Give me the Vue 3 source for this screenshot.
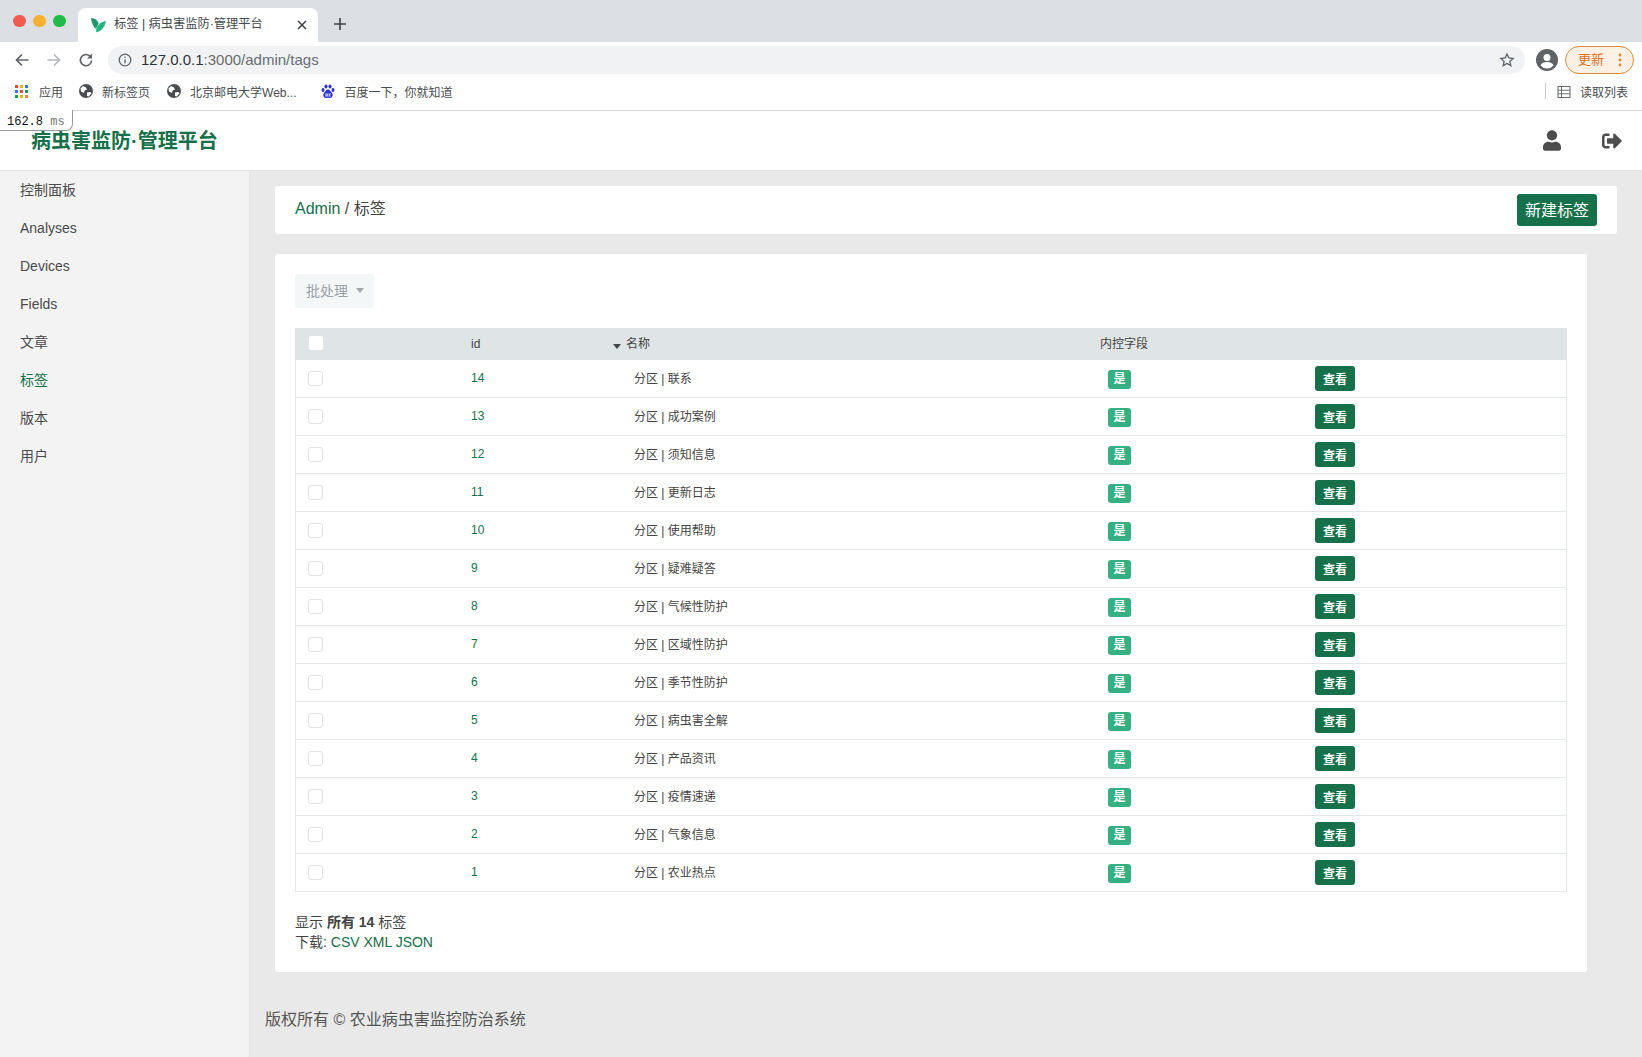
<script setup>
const nav = [
  { label: '控制面板' }, { label: 'Analyses' }, { label: 'Devices' }, { label: 'Fields' },
  { label: '文章' }, { label: '标签', active: true }, { label: '版本' }, { label: '用户' },
]
const rows = [
  [14, '联系'], [13, '成功案例'], [12, '须知信息'], [11, '更新日志'], [10, '使用帮助'],
  [9, '疑难疑答'], [8, '气候性防护'], [7, '区域性防护'], [6, '季节性防护'], [5, '病虫害全解'],
  [4, '产品资讯'], [3, '疫情速递'], [2, '气象信息'], [1, '农业热点'],
]
const appColors = ['#e0493d', '#f4b400', '#3c78d8', '#3c78d8', '#e0493d', '#0f9d58', '#0f9d58', '#f4b400', '#e08a3d']
</script>

<template>
  <div class="page">
    <div class="browser">
      <div class="tabstrip">
        <div class="lights">
          <i class="light red"></i><i class="light amber"></i><i class="light green"></i>
        </div>
        <div class="tab">
          <svg class="favicon" viewBox="0 0 16 16"><path fill="#1c9a6a" d="M0 .5C4 .8 7 2.500 8 6.500L5.500 12C2.500 10.500.8 6 0 .5z"/><path fill="#25b680" d="M15.800 3.500C15.300 9 12 14.500 5.500 15.800 4.800 10 9 5 15.800 3.500z"/></svg>
          <span class="tab-title">标签 | 病虫害监防·管理平台</span>
          <svg class="tab-close" viewBox="0 0 10 10"><path d="M1 1l8 8M9 1l-8 8" stroke="#3c4043" stroke-width="1.500" fill="none"/></svg>
        </div>
        <svg class="new-tab" viewBox="0 0 12 12"><path d="M6 0v12M0 6h12" stroke="#3c4043" stroke-width="1.600" fill="none"/></svg>
      </div>
      <div class="toolbar">
        <svg class="nav-ic" viewBox="0 0 14 14"><path d="M13.500 7H1.500M7 1.500 1.500 7 7 12.500" stroke="#5f6368" stroke-width="1.700" fill="none"/></svg>
        <svg class="nav-ic" viewBox="0 0 14 14"><path d="M.5 7h12M7 1.500 12.500 7 7 12.500" stroke="#b4b7bb" stroke-width="1.700" fill="none"/></svg>
        <svg class="nav-ic" viewBox="0 0 14 14"><path d="M11.800 4.200A5.600 5.600 0 1 0 12.600 7.500" stroke="#5f6368" stroke-width="1.700" fill="none"/><path d="M13 0.500v5H8z" fill="#5f6368"/></svg>
        <div class="omnibox">
          <svg class="info" viewBox="0 0 14 14"><circle cx="7" cy="7" r="5.800" stroke="#5f6368" stroke-width="1.300" fill="none"/><path d="M7 6.200v4M7 3.700v1.300" stroke="#5f6368" stroke-width="1.300"/></svg>
          <span class="url"><b>127.0.0.1</b>:3000/admin/tags</span>
          <svg class="star" viewBox="0 0 24 24"><path d="M12 3l2.700 6 6.500.7-4.900 4.400 1.400 6.400-5.700-3.300-5.700 3.300 1.400-6.400-4.900-4.400 6.500-.7z" stroke="#5f6368" stroke-width="2" fill="none"/></svg>
        </div>
        <svg class="avatar" viewBox="0 0 22 22"><circle cx="11" cy="11" r="11" fill="#5f6368"/><circle cx="11" cy="8.500" r="3.500" fill="#fff"/><path d="M4.500 16.500c1-2.800 4-3.500 6.500-3.500s5.500.7 6.500 3.500A8.500 8.500 0 0 1 11 19.500a8.500 8.500 0 0 1-6.500-3z" fill="#fff"/></svg>
        <div class="update">
          <span>更新</span>
          <svg class="dots" viewBox="0 0 4 14"><circle cx="2" cy="2" r="1.400"/><circle cx="2" cy="7" r="1.400"/><circle cx="2" cy="12" r="1.400"/></svg>
        </div>
      </div>
      <div class="bookmarks">
        <div class="bm first">
          <span class="apps"><i v-for="(c, i) in appColors" :key="i" :style="{ background: c }"></i></span>
          <span>应用</span>
        </div>
        <div class="bm">
          <svg class="globe" viewBox="0 0 14 14"><circle cx="7" cy="7" r="7" fill="#4a4d51"/><path d="M1.500 4.500 4 2l3 1.500 1 2-2.500 1L5 9 2 7.500zM8 8.500l3.500-.5 1 1.500-3 3-1.500-.5z" fill="#fff"/></svg>
          <span>新标签页</span>
        </div>
        <div class="bm wide">
          <svg class="globe" viewBox="0 0 14 14"><circle cx="7" cy="7" r="7" fill="#4a4d51"/><path d="M1.500 4.500 4 2l3 1.500 1 2-2.500 1L5 9 2 7.500zM8 8.500l3.500-.5 1 1.500-3 3-1.500-.5z" fill="#fff"/></svg>
          <span>北京邮电大学Web...</span>
        </div>
        <div class="bm baidu">
          <svg class="paw" viewBox="0 0 14 15"><g fill="#2b32d6"><ellipse cx="2" cy="6" rx="1.500" ry="2"/><ellipse cx="5" cy="2.500" rx="1.500" ry="2"/><ellipse cx="9" cy="2.500" rx="1.500" ry="2"/><ellipse cx="12" cy="6" rx="1.500" ry="2"/><path d="M7 5.500c2 0 2.500 2 4 3.500 1.500 1.700.5 5-2 5-1 0-1.500-.3-2-.3s-1 .3-2 .3c-2.500 0-3.500-3.300-2-5 1.500-1.500 2-3.500 4-3.500z"/></g><path d="M4 9.500h6v3H4z" fill="#dfe3ff"/><path d="M5 9.500v3M7.300 9.500v3M9.300 9.500v3" stroke="#2b32d6" stroke-width=".8"/></svg>
          <span>百度一下，你就知道</span>
        </div>
        <div class="reading">
          <svg class="read-ic" viewBox="0 0 14 14"><path d="M1 1.500h12v11H1zM4.500 1.500v11M1 5.200h12M1 8.800h12" stroke="#6b6e72" stroke-width="1.100" fill="none"/></svg>
          <span>读取列表</span>
        </div>
      </div>
    </div>

    <div class="perf"><b>162.8</b> <span>ms</span></div>

    <header class="app-header">
      <div class="brand">病虫害监防·管理平台</div>
      <div class="head-icons">
        <svg class="user-ic" viewBox="0 0 448 512"><path d="M224 256c70.700 0 128-57.300 128-128S294.700 0 224 0 96 57.300 96 128s57.300 128 128 128zm89.600 32h-16.700c-22.200 10.200-46.900 16-72.900 16s-50.600-5.800-72.900-16h-16.700C60.200 288 0 348.200 0 422.400V464c0 26.500 21.500 48 48 48h352c26.500 0 48-21.500 48-48v-41.600c0-74.200-60.200-134.400-134.400-134.400z"/></svg>
        <svg class="out-ic" viewBox="0 0 512 512"><path d="M497 273L329 441c-15 15-41 4.500-41-17v-96H152c-13.300 0-24-10.700-24-24v-96c0-13.300 10.700-24 24-24h136V88c0-21.400 25.900-32 41-17l168 168c9.300 9.400 9.300 24.600 0 34zM192 436v-40c0-6.600-5.400-12-12-12H96c-17.700 0-32-14.300-32-32V160c0-17.700 14.300-32 32-32h84c6.600 0 12-5.400 12-12V76c0-6.600-5.400-12-12-12H96c-53 0-96 43-96 96v192c0 53 43 96 96 96h84c6.600 0 12-5.400 12-12z"/></svg>
      </div>
    </header>

    <div class="body">
      <aside class="sidebar">
        <a v-for="n in nav" :key="n.label" class="nav-item" :class="{ active: n.active }">{{ n.label }}</a>
      </aside>
      <main class="main">
        <div class="title-card">
          <div class="crumb"><a class="link">Admin</a> / 标签</div>
          <button class="new-btn">新建标签</button>
        </div>
        <section class="card">
          <div class="bulk">批处理<i class="caret"></i></div>
          <table class="grid">
            <colgroup>
              <col class="c1" /><col class="c2" /><col class="c3" /><col class="c4" /><col />
            </colgroup>
            <thead>
              <tr>
                <th class="check-cell head"><span class="head-box"></span></th>
                <th>id</th>
                <th class="sorted"><i class="sort"></i>名称</th>
                <th>内控字段</th>
                <th></th>
              </tr>
            </thead>
            <tbody>
              <tr v-for="r in rows" :key="r[0]">
                <td class="check-cell"><span class="box"></span></td>
                <td class="id"><a class="link">{{ r[0] }}</a></td>
                <td class="name">分区 | {{ r[1] }}</td>
                <td class="flag"><span class="pill">是</span></td>
                <td><button class="view">查看</button></td>
              </tr>
            </tbody>
          </table>
          <div class="summary">
            <div>显示 <b>所有 14</b> 标签</div>
            <div>下载: <a class="link">CSV</a> <a class="link">XML</a> <a class="link">JSON</a></div>
          </div>
        </section>
        <footer class="foot">版权所有 © 农业病虫害监控防治系统</footer>
      </main>
    </div>
  </div>
</template>

<style>
html, body { margin: 0; background: #e9e9e9; }
</style>

<style scoped>
.page {
  position: relative;
  height: 1057px;
  overflow: hidden;
  display: flex;
  flex-direction: column;
  font-family: "Liberation Sans", "Noto Sans CJK SC", sans-serif;
  color: #444;
}
.browser { background: #fff; border-bottom: 1px solid #d4d4d4; height: 111px; box-sizing: border-box; flex: none; }
.tabstrip { height: 42px; background: #dcdfe4; display: flex; align-items: flex-end; }
.lights { display: flex; gap: 7.500px; padding: 0 0 15px 13px; width: 78px; box-sizing: border-box; flex: none; }
.light { width: 12.500px; height: 12.500px; border-radius: 50%; flex: none; }
.red { background: #f15b52; }
.amber { background: #f7b131; }
.green { background: #21bb47; }
.tab {
  width: 240px; height: 34px; background: #fff; border-radius: 8px 8px 0 0; flex: none;
  display: flex; align-items: center; box-sizing: border-box; padding: 0 11px 0 13px;
  font-size: 12.250px; line-height: 16px; color: #45484c;
}
.favicon { width: 15px; height: 16px; flex: none; }
.tab-title { margin-left: 8px; flex: 1; white-space: nowrap; margin-top: -2px; }
.tab-close { width: 10px; height: 10px; flex: none; }
.new-tab { width: 12px; height: 12px; margin: 0 0 12px 16px; flex: none; }
.toolbar { height: 36px; display: flex; align-items: center; padding: 0 8px 0 15px; box-sizing: border-box; }
.nav-ic { width: 14px; height: 14px; margin-right: 18px; flex: none; }
.omnibox {
  flex: 1; height: 28px; background: #f0f2f4; border-radius: 14px; margin-left: -3px;
  display: flex; align-items: center; padding: 0 10px; box-sizing: border-box;
}
.info { width: 14px; height: 14px; flex: none; }
.url { margin-left: 9px; flex: 1; font-size: 15px; line-height: 18px; margin-top: -1px; color: #6a6d71; }
.url b { font-weight: 400; color: #2f3235; }
.star { width: 16px; height: 16px; flex: none; }
.avatar { width: 22px; height: 22px; margin-left: 11px; flex: none; }
.update {
  margin-left: 7px; width: 69px; height: 28px; border: 1px solid #e08a3f; border-radius: 14px;
  background: #fdf1e6; color: #d9701e; font-size: 13px; line-height: 18px; box-sizing: border-box;
  display: flex; align-items: center; justify-content: space-between; padding: 0 11px 0 12px;
}
.dots { width: 4px; height: 14px; fill: #d9882e; flex: none; }
.bookmarks { height: 32px; display: flex; align-items: center; padding: 0 14px 6px 15px; font-size: 12px; color: #4a4d51; box-sizing: border-box; }
.bm { display: flex; align-items: center; gap: 9px; white-space: nowrap; margin-right: 17px; }
.bm.first { gap: 11px; margin-right: 16px; }
.bm.wide { margin-right: 24px; }
.bm.baidu { gap: 10px; }
.apps { display: grid; grid-template-columns: repeat(3, 3px); gap: 2px; }
.apps i { width: 3px; height: 3px; display: block; }
.globe { width: 14px; height: 14px; flex: none; }
.paw { width: 14px; height: 15px; flex: none; }
.reading { margin-left: auto; display: flex; align-items: center; gap: 9px; border-left: 1px solid #c9c9c9; padding-left: 11px; height: 16px; }
.read-ic { width: 14px; height: 14px; margin-top: 1px; }
.perf {
  position: absolute; left: 0; top: 110px; width: 73px; height: 21px; box-sizing: border-box;
  background: #fff; border: 1px solid #9a9a9a; border-left: 0; border-top: 0; border-radius: 0 0 7px 0;
  font: 12px/24px "Liberation Mono", monospace; padding-left: 7px; color: #777; white-space: nowrap; z-index: 2;
}
.perf b { font-weight: 400; color: #111; }
.app-header {
  height: 60px; flex: none; background: #fff; border-bottom: 1px solid #e2e2e2; box-sizing: border-box;
  display: flex; align-items: center; justify-content: space-between; padding: 0 20px 0 31px;
}
.brand { font-size: 20px; font-weight: 700; color: #16704a; white-space: nowrap; margin-top: -2px; }
.head-icons { display: flex; align-items: center; gap: 41px; }
.user-ic { width: 18px; height: 21px; fill: #4d4d4d; }
.out-ic { width: 20px; height: 20px; fill: #4d4d4d; }
.body { flex: 1; display: flex; min-height: 0; }
.sidebar { width: 250px; flex: none; background: #f3f3f3; border-right: 1px solid #e6e6e6; box-sizing: border-box; display: flex; flex-direction: column; }
.nav-item { height: 38px; line-height: 38px; padding-left: 20px; font-size: 14px; color: #4a4a4a; flex: none; }
.nav-item.active { color: #16704a; }
.main { flex: 1; background: #e9e9e9; padding: 15px 0 0 25px; box-sizing: border-box; min-width: 0; }
.title-card {
  height: 48px; margin-right: 25px; background: #fff; border-radius: 3px; box-sizing: border-box;
  display: flex; align-items: center; justify-content: space-between; padding: 0 20px; font-size: 16px; color: #444;
}
.crumb { margin-top: -3px; line-height: 20px; }
.link { color: #16704a; text-decoration: none; }
.new-btn {
  width: 80px; height: 32px; border: 0; padding: 0 0 2px; background: #16704a; color: #fff; border-radius: 3px;
  font: 16px "Liberation Sans", "Noto Sans CJK SC", sans-serif;
}
.card { margin: 20px 55px 0 0; background: #fff; border-radius: 3px; padding: 20px; }
.bulk {
  width: 79px; height: 34px; box-sizing: border-box; background: #f4f7f8; border-radius: 3px; color: #9aa1a6;
  font-size: 14px; line-height: 20px; display: flex; align-items: center; padding: 0 0 1px 11px; margin-bottom: 20px;
}
.caret { border: 4.500px solid transparent; border-top: 5px solid #a0a6ab; border-bottom: 0; margin-left: 8px; }
.grid { width: 1272px; border-collapse: separate; border-spacing: 0; table-layout: fixed; font-size: 12px; line-height: 16px; color: #444; }
.c1 { width: 164px; }
.c2 { width: 141px; }
.c3 { width: 488px; }
.c4 { width: 215px; }
.grid th { height: 32px; background: #dfe5e7; font-weight: 400; text-align: left; padding: 0 0 0 12px; box-sizing: border-box; }
.grid td { height: 38px; padding: 0 0 0 12px; border-bottom: 1px solid #e3e7e9; box-sizing: border-box; }
.grid tbody tr td:first-child { border-left: 1px solid #e3e7e9; }
.grid tbody tr td:last-child { border-right: 1px solid #e3e7e9; }
.grid .check-cell { padding-left: 12px; line-height: 0; }
.grid .check-cell.head { padding-left: 14px; }
.grid .sorted { padding-left: 13px; }
.head-box { display: inline-block; width: 14px; height: 14px; background: #fff; border-radius: 2px; margin-top: -3px; }
.box { display: inline-block; width: 15px; height: 15px; box-sizing: border-box; border: 1px solid #dfe3e5; border-radius: 3px; background: #fff; }
.sort { display: inline-block; border: 4px solid transparent; border-top: 5px solid #444; border-bottom: 0; margin-right: 5px; vertical-align: -1px; }
.grid .id { padding-bottom: 1px; }
.grid .name { padding-left: 34px; }
.grid .flag { padding-left: 20px; }
.pill {
  display: inline-block; width: 23px; height: 19px; line-height: 19px; text-align: center; vertical-align: middle; margin-top: 1px;
  background: #35b082; color: #fff; border-radius: 3px; font-weight: 700;
}
.view {
  width: 40px; height: 25px; padding: 0 0 1px; border: 0; border-radius: 3px; background: #16704a; color: #fff; vertical-align: middle;
  font: 700 12px "Liberation Sans", "Noto Sans CJK SC", sans-serif;
}
.summary { margin-top: 20px; font-size: 14px; line-height: 20px; color: #444; }
.summary b { font-weight: 700; }
.foot { margin: 38px 0 0 -10px; font-size: 16px; line-height: 20px; color: #555; }
</style>
